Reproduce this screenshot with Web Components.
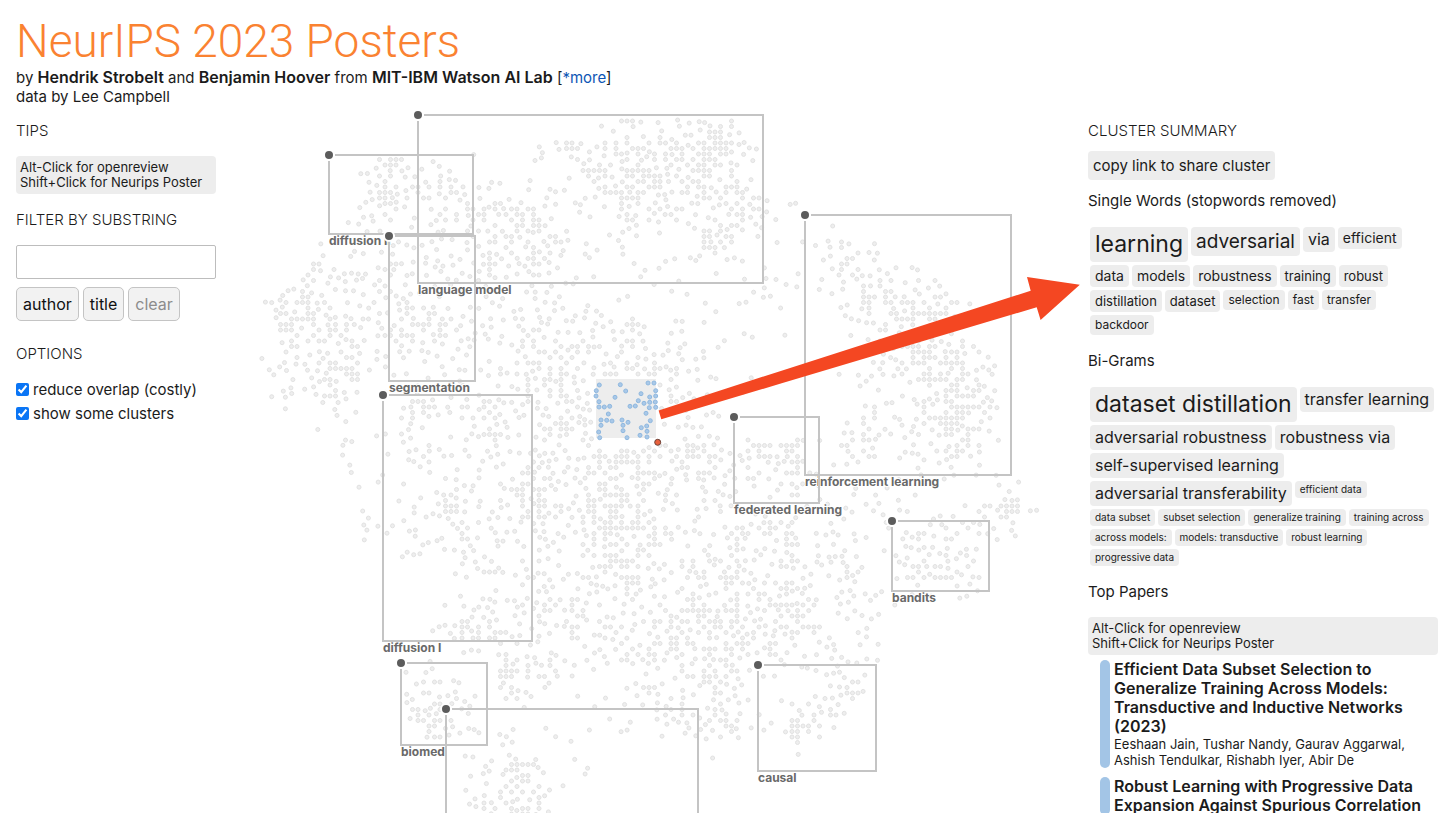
<!DOCTYPE html>
<html lang="en">
<head>
<meta charset="utf-8">
<title>NeurIPS 2023 Posters</title>
<style>
  html, body { margin: 0; height: 100%; }
  body { font: 16px/19px Inter, "Liberation Sans", sans-serif; color: #1b1b1b; background: #fff; overflow: hidden; }
</style>
</head>
<body>
<poster-app></poster-app>
<script>
const define = (name, markup, setup) => {
  const tpl = document.createElement('template');
  tpl.innerHTML = markup;
  customElements.define(name, class extends HTMLElement {
    constructor() {
      super();
      this.attachShadow({ mode: 'open' }).append(tpl.content.cloneNode(true));
    }
    connectedCallback() { if (setup) setup(this, this.shadowRoot); }
  });
};

define('page-header', `
<style>
  :host { display: block; padding: 14px 16px 0; }
  h1 { margin: 0; font: 300 46px/54px Roboto, sans-serif; color: #fa8231; }
  p { margin: 0; font-size: 15px; line-height: 19px; white-space: nowrap; }
  b { font-weight: 600; font-size: 16px; line-height: 18px; }
  a { color: #0d56b5; text-decoration: none; }
</style>
<h1>NeurIPS 2023 Posters</h1>
<p>by <b>Hendrik Strobelt</b> and <b>Benjamin Hoover</b> from <b>MIT-IBM Watson AI Lab</b> [<a href="#more">*more</a>]</p>
<p>data by Lee Campbell</p>`);

define('section-title', `
<style>
  :host { display: block; }
  h2 { margin: 0; font-size: 15px; line-height: 20px; font-weight: var(--title-weight, 300); white-space: nowrap; }
</style>
<h2><slot></slot></h2>`);

define('tip-note', `
<style>
  :host { display: block; background: #ededed; border-radius: 4px; padding: 4px; font-size: 13px; line-height: 15px; }
</style>
<slot></slot>`);

define('filter-form', `
<style>
  :host { display: block; }
  input { display: block; box-sizing: border-box; width: 100%; height: 34px; margin: 0 0 8px; padding: 0 8px;
          border: 1px solid #bdbdbd; border-radius: 2px; font: inherit; background: #fff; }
  div { display: flex; gap: 4px; }
  button { height: 34px; padding: 0 6px; border: 1px solid #c4c4c4; border-radius: 5px; background: #f2f2f2; color: #111;
           font: inherit; }
  button:disabled { color: #8c8c8c; }
</style>
<input type="text" aria-label="Filter by substring">
<div><button type="button">author</button><button type="button">title</button><button type="button" disabled>clear</button></div>`);

define('option-toggle', `
<style>
  :host { display: block; }
  label { display: flex; align-items: center; gap: 4px; height: 24px; font-size: 15px; white-space: nowrap; }
  input { width: 13px; height: 13px; margin: 0; accent-color: #0a75f5; }
</style>
<label><input type="checkbox" checked><span><slot></slot></span></label>`);

define('side-controls', `
<style>
  :host { display: flex; flex-direction: column; }
  tip-note { margin: 15px 0 16px; }
  filter-form { margin: 15px 0 23px; }
  .options { margin-top: 13px; }
</style>
<section-title>TIPS</section-title>
<tip-note>Alt-Click for openreview<br>Shift+Click for Neurips Poster</tip-note>
<section-title>FILTER BY SUBSTRING</section-title>
<filter-form></filter-form>
<section-title>OPTIONS</section-title>
<div class="options">
  <option-toggle>reduce overlap (costly)</option-toggle>
  <option-toggle>show some clusters</option-toggle>
</div>`);

define('word-chip', `
<style>
  :host { display: block; background: #ededed; border-radius: 4px; padding: 3px 5px; white-space: nowrap; font-size: 14px; line-height: 16px; }
  :host([size="xl"]) { font-size: 23px; line-height: 29px; }
  :host([size="l"]) { font-size: 19px; line-height: 23px; }
  :host([size="m"]) { font-size: 16px; line-height: 19px; }
  :host([size="s"]) { font-size: 13px; line-height: 16px; }
  :host([size="xs"]) { font-size: 12px; line-height: 14px; }
  :host([size="xxs"]) { font-size: 10px; line-height: 11px; }
</style>
<slot></slot>`);

define('word-cloud', `
<style>
  :host { display: flex; flex-wrap: wrap; align-items: flex-start; gap: 3px; padding: 0 2px; }
</style>
<slot></slot>`);

define('paper-card', `
<style>
  :host { display: flex; gap: 4px; margin: 0 0 9px 12px; }
  i { flex: 0 0 10px; border-radius: 5px; background: #a3c5e6; }
  h3 { margin: 0; font-size: 16px; line-height: 19px; font-weight: 600; }
  p { margin: 0; font-size: 13px; line-height: 16px; }
</style>
<i></i><div><h3><slot name="title"></slot></h3><p><slot></slot></p></div>`);

define('cluster-summary', `
<style>
  :host { display: flex; flex-direction: column; align-items: stretch; min-width: 0; }
  .share { align-self: flex-start; height: 29px; padding: 0 5px; margin: 10px 0 11px; border: 0; border-radius: 4px;
           background: #ededed; color: inherit; font: inherit; font-size: 15px; white-space: nowrap; }
  .sub { --title-weight: 400; }
  word-cloud { margin: 16px 0; }
  .major { margin-bottom: 3px; }
  .minor { margin-top: 0; }
  tip-note { margin: 15px 0 5px; }
</style>
<section-title>CLUSTER SUMMARY</section-title>
<button class="share" type="button">copy link to share cluster</button>
<section-title class="sub">Single Words (stopwords removed)</section-title>
<word-cloud>
  <word-chip size="xl">learning</word-chip><word-chip size="l">adversarial</word-chip><word-chip size="m">via</word-chip><word-chip>efficient</word-chip>
  <word-chip>data</word-chip><word-chip>models</word-chip><word-chip>robustness</word-chip><word-chip size="s">training</word-chip><word-chip size="s">robust</word-chip>
  <word-chip size="s">distillation</word-chip><word-chip size="s">dataset</word-chip><word-chip size="xs">selection</word-chip><word-chip size="xs">fast</word-chip><word-chip size="xs">transfer</word-chip>
  <word-chip size="xs">backdoor</word-chip>
</word-cloud>
<section-title class="sub">Bi-Grams</section-title>
<word-cloud class="major">
  <word-chip size="xl">dataset distillation</word-chip><word-chip size="m">transfer learning</word-chip>
  <word-chip size="m">adversarial robustness</word-chip><word-chip size="m">robustness via</word-chip>
  <word-chip size="m">self-supervised learning</word-chip>
  <word-chip size="m">adversarial transferability</word-chip><word-chip size="xxs">efficient data</word-chip>
</word-cloud>
<word-cloud class="minor">
  <word-chip size="xxs">data subset</word-chip><word-chip size="xxs">subset selection</word-chip><word-chip size="xxs">generalize training</word-chip><word-chip size="xxs">training across</word-chip>
  <word-chip size="xxs">across models:</word-chip><word-chip size="xxs">models: transductive</word-chip><word-chip size="xxs">robust learning</word-chip>
  <word-chip size="xxs">progressive data</word-chip>
</word-cloud>
<section-title class="sub">Top Papers</section-title>
<tip-note>Alt-Click for openreview<br>Shift+Click for Neurips Poster</tip-note>
<paper-card><span slot="title">Efficient Data Subset Selection to Generalize Training Across Models: Transductive and Inductive Networks (2023)</span>Eeshaan Jain, Tushar Nandy, Gaurav Aggarwal, Ashish Tendulkar, Rishabh Iyer, Abir De</paper-card>
<paper-card><span slot="title">Robust Learning with Progressive Data Expansion Against Spurious Correlation</span></paper-card>`);

/* Number of posters in each 20-unit cell of the map (hexadecimal); the first cell is at (260, 100). */
const DENSITY = `
0000000000000 0000000000000 0000000000000
0000000000000 0000253449500 0000000000000
0000000000100 1474668a6a940 0000000000000
000003a433000 1018599668520 0000000000000
000004a566431 2313598467650 0000000000000
0000146216567 6322285633574 2000000000000
0000330133556 8510142027831 0010000000000
0002214242355 6534120126301 0246400000000
0054335444474 6311013111023 1036322000000
0363426423032 4320011210013 2112764610000
49a5453652333 3424200002110 1004569861000
0866536775442 6443481221020 1002363141000
1523732343412 5655254443100 0010048975100
3448812123135 8563656522010 0011346797400
1447301323322 5662000642010 0000303497300
0104100772584 4464000133000 0000542696700
0010111411474 2854000243000 0003624586200
0000401452242 3435666586458 8206514376100
0000201122222 6446675465454 7311011232100
0000110126306 b726865504412 5302112000140
0000021248343 8747873315221 1113331121782
0000042403622 4437a76541567 6141123555330
0000000432432 2405866014534 5234024434000
0000000001452 6335664375842 6446126765000
0000000000130 3324474254665 7414212123000
0000000001444 5565232577646 9514410000000
0000000024b74 3372736666874 7511200000000
0000000000315 4203277657757 2341300000000
0000000130009 5632113258612 1343200000000
0000000364107 2210135145410 0138100000000
0000000695400 1001114556420 5561000000000
0000000064312 0201030344812 8510000000000
0000000000204 1020000001000 1000000000000
0000000000148 6102000000000 0000000000000
0000000000226 7210000000000 0000000000000
0000000000267 9100000000000 0000000000000`.trim().split('\n').map(r => r.replace(/ /g, ''));

const BOXES = [
  [418, 115, 345, 168, 'language model'], [329, 155, 144, 79, 'diffusion II'], [389, 236, 86, 145, 'segmentation'],
  [805, 215, 206, 260, 'reinforcement learning'], [383, 395, 149, 246, 'diffusion I'], [734, 417, 85, 86, 'federated learning'],
  [892, 521, 97, 70, 'bandits'], [758, 665, 118, 106, 'causal'], [401, 663, 86, 82, 'biomed'], [446, 709, 252, 168, '']
];

/* Selected posters, in thirds of a map unit from (520, 370). */
const PICKED = [238,45,229,62,228,78,237,95,237,111,253,111,269,109,301,44,317,63,285,82,384,39,402,39,363,71,407,62,407,78,389,81,
  355,92,372,100,389,97,406,96,330,109,346,108,388,113,407,112,265,132,378,130,243,150,260,151,276,153,243,166,306,150,324,157,
  309,166,309,182,391,152,364,173,380,168,381,184,236,186,239,203,321,203,360,196,381,201];

define('poster-map', `
<style>
  :host { display: block; min-width: 0; }
  svg { display: block; width: 100%; height: auto; overflow: visible; }
  .dot { fill: #eeeeee; stroke: #e2e2e2; stroke-width: 1; }
  .picked { fill: #a9c8e8; stroke: #8fb8df; stroke-width: 1; }
  .frame { fill: none; stroke: #c4c4c4; stroke-width: 2; }
  .knob { fill: #5c5c5c; stroke: #fff; stroke-width: 2; }
  text { font-size: 12px; font-weight: 700; fill: #696969; stroke: #fff; stroke-width: 2; paint-order: stroke; }
</style>
<svg viewBox="216 106 872 707" role="img" aria-label="Map of posters">
  <g id="dots"></g>
  <rect x="596" y="379" width="60" height="59" fill="#ededed"/>
  <g id="picked"></g>
  <g id="boxes"></g>
  <circle cx="657.7" cy="442.3" r="3" fill="#e8603c" stroke="#6b4238" stroke-width="1"/>
  <path fill="#f44722" d="M658.6 410.4 780 371.2 1030.7 290.7 1027 277 1079.8 284.7 1040.6 320 1036.7 307.3 780 383.8 661.3 419.2Z"/>
</svg>`, (host, root) => {
  let seed = 20231;
  const rnd = () => {
    seed = (seed * 1664525 + 1013904223) >>> 0;
    return seed / 4294967296;
  };
  const pts = [];
  const free = (x, y) => !(x > 592 && x < 660 && y > 375 && y < 446) && !pts.some(p => (p[0] - x) ** 2 + (p[1] - y) ** 2 < 28);
  DENSITY.forEach((row, r) => [...row].forEach((ch, c) => {
    const count = parseInt(ch, 16);
    let placed = 0;
    for (let tries = 0; placed < count && tries < 150; tries++) {
      let x = 260 + 20 * c + rnd() * 20;
      let y = 100 + 20 * r + rnd() * 20;
      if (count > 4 && tries % 5) {
        x = Math.round(x / 5.5) * 5.5;
        y = Math.round(y / 5.5) * 5.5;
      }
      if (free(x, y)) { pts.push([x, y]); placed++; }
    }
  }));
  root.getElementById('dots').innerHTML = pts.map(([x, y]) =>
    `<circle class="dot" cx="${x.toFixed(1)}" cy="${y.toFixed(1)}" r="2"/>`).join('');
  let picked = '';
  for (let i = 0; i < PICKED.length; i += 2)
    picked += `<circle class="picked" cx="${(520 + PICKED[i] / 3).toFixed(1)}" cy="${(370 + PICKED[i + 1] / 3).toFixed(1)}" r="2"/>`;
  root.getElementById('picked').innerHTML = picked;
  root.getElementById('boxes').innerHTML = BOXES.map(([x, y, w, h, name]) => {
    const open = `M${x + 6} ${y}H${x + w}V${y + h}H${x}V${y + 6}`;
    const label = name ? `<text x="${x}" y="${y + h + 11}">${name}</text>` : '';
    return `${label}<path class="frame" d="${open}"/><circle class="knob" cx="${x}" cy="${y}" r="5"/>`;
  }).join('');
});

define('poster-app', `
<style>
  :host { display: flex; flex-direction: column; height: 100vh; overflow: hidden; }
  main { flex: 1; min-height: 0; display: grid; grid-template-columns: 200px minmax(0, 1fr) 350px; padding: 0 18px 0 16px; align-items: start; }
  side-controls, cluster-summary { padding-top: 15px; }
</style>
<page-header></page-header>
<main>
  <side-controls></side-controls>
  <poster-map></poster-map>
  <cluster-summary></cluster-summary>
</main>`);
</script>
</body>
</html>
